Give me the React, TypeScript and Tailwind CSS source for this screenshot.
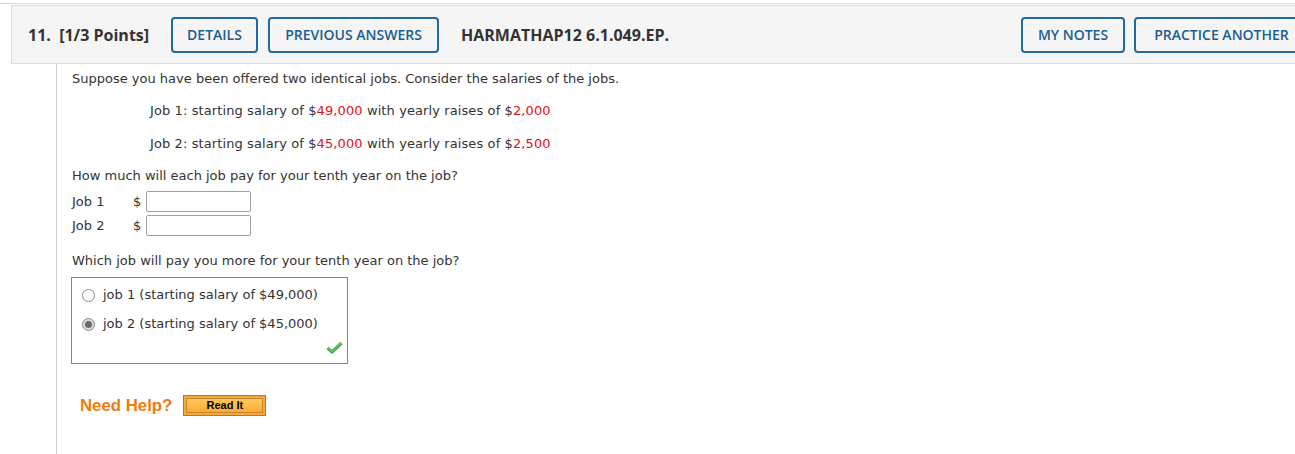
import React from "react";

const body = { fontFamily: '"DejaVu Sans", Verdana, sans-serif' };
const head = { fontFamily: '"Open Sans", sans-serif' };

function Btn({ children, w }: { children: React.ReactNode; w: string }) {
  return (
    <div
      className={`h-[36px] ${w} shrink-0 rounded-[4px] border-2 border-[#1f6a9e] flex items-center justify-center text-[14px] font-semibold text-[#1c5d8f]`}
    >
      {children}
    </div>
  );
}

function Radio({ checked }: { checked?: boolean }) {
  return (
    <div
      className={`w-[13px] h-[13px] rounded-full border border-[#8a8a8a] flex items-center justify-center shrink-0 ${
        checked ? "bg-[#dcdcdc]" : "bg-white"
      }`}
    >
      {checked && <div className="w-[7px] h-[7px] rounded-full bg-[#6b6b6b]" />}
    </div>
  );
}

export default function App() {
  const red = "text-[#e60f14]";
  return (
    <div className="w-[1295px] h-[454px] bg-white overflow-hidden relative">
      <div className="h-[3px]" />
      <div className="h-px bg-[#d6d6d6]" />
      <div className="h-px" />
      <div
        style={head}
        className="ml-[11px] w-[1300px] h-[59px] border border-[#dcdcdc] bg-[#f5f5f5] flex items-center"
      >
        <div className="ml-[16px] w-[143px] text-[16px] font-bold text-[#333] whitespace-pre">
          {"11.  [1/3 Points]"}
        </div>
        <Btn w="w-[87px]">DETAILS</Btn>
        <div className="w-[10px]" />
        <Btn w="w-[171px]">PREVIOUS ANSWERS</Btn>
        <div className="ml-[22px] text-[16px] font-bold text-[#333]">HARMATHAP12 6.1.049.EP.</div>
        <div className="flex-1" />
        <Btn w="w-[104px]">MY NOTES</Btn>
        <div className="w-[9px]" />
        <Btn w="w-[175px]">PRACTICE ANOTHER</Btn>
        <div className="w-px" />
      </div>
      <div
        style={body}
        className="ml-[56px] h-[400px] border-l border-[#cfcfcf] pl-[15px] text-[13px] text-[#333]"
      >
        <div className="h-[7px]" />
        <div className="leading-[16px]">
          Suppose you have been offered two identical jobs. Consider the salaries of the jobs.
        </div>
        <div className="mt-[16px] ml-[78px] leading-[16px] tracking-[0.1px]">
          Job 1: starting salary of $<span className={red}>49,000</span> with yearly raises of $
          <span className={red}>2,000</span>
        </div>
        <div className="mt-[17px] ml-[78px] leading-[16px] tracking-[0.1px]">
          Job 2: starting salary of $<span className={red}>45,000</span> with yearly raises of $
          <span className={red}>2,500</span>
        </div>
        <div className="mt-[16px] leading-[16px]">How much will each job pay for your tenth year on the job?</div>
        <div className="mt-[7px] flex items-center h-[21px]">
          <div className="w-[61px]">Job 1</div>
          <div className="w-[13px]">$</div>
          <div className="w-[105px] h-[21px] border border-[#a0a0a0] rounded-[2px] bg-white" />
        </div>
        <div className="mt-[3px] flex items-center h-[21px]">
          <div className="w-[61px]">Job 2</div>
          <div className="w-[13px]">$</div>
          <div className="w-[105px] h-[21px] border border-[#a0a0a0] rounded-[2px] bg-white" />
        </div>
        <div className="mt-[17px] leading-[16px]">Which job will pay you more for your tenth year on the job?</div>
        <div className="mt-[8px] -ml-[1px] w-[277px] h-[87px] bg-[#62a63c] p-px">
          <div className="w-full h-full bg-white relative">
            <div className="h-[9px]" />
            <div className="flex items-center h-[16px] ml-[10px]">
              <Radio />
              <div className="ml-[8px] leading-[16px]">job 1 (starting salary of $49,000)</div>
            </div>
            <div className="flex items-center h-[16px] mt-[13px] ml-[10px]">
              <Radio checked />
              <div className="ml-[8px] leading-[16px]">job 2 (starting salary of $45,000)</div>
            </div>
            <svg
              className="absolute left-[254px] top-[63px]"
              width="17"
              height="13"
              viewBox="0 0 17 13"
            >
              <path
                d="M1.5 7 L6 11 L15.5 2"
                fill="none"
                stroke="#4fae4f"
                strokeWidth="3.4"
                strokeLinejoin="round"
              />
              <path d="M2 7 L6 10.5 L15 2" fill="none" stroke="#7ccc7c" strokeWidth="1" />
            </svg>
          </div>
        </div>
        <div className="mt-[31px] flex items-center ml-[8px]">
          <div
            style={{ fontFamily: '"Liberation Sans", Arial, sans-serif' }}
            className="text-[16.8px] font-bold text-[#ee7c11] leading-[20px]"
          >
            Need Help?
          </div>
          <div
            style={{ fontFamily: '"Liberation Sans", Arial, sans-serif' }}
            className="ml-[11px] w-[83px] h-[21px] border border-[#b8772d] bg-[#f8a838] p-[2px]"
          >
            <div className="h-full w-full border border-[#c9852e] bg-gradient-to-b from-[#ffcb5c] to-[#f9aa33] flex items-center justify-center text-[11px] font-bold text-black leading-none">
              Read It
            </div>
          </div>
        </div>
      </div>
    </div>
  );
}
